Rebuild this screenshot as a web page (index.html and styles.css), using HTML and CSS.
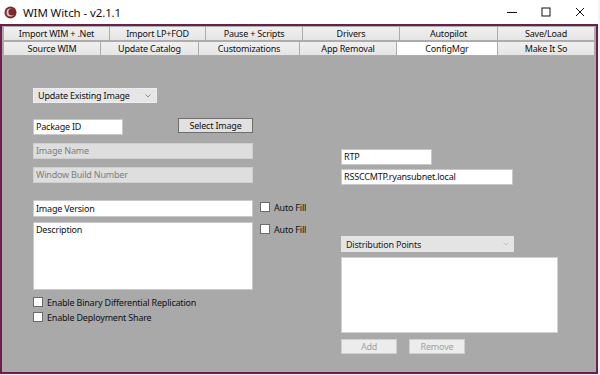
FILE: index.html
```html
<!DOCTYPE html>
<html lang="en">
<head>
    <meta charset="UTF-8">
    <title>WIM Witch - v2.1.1</title>
    <link rel="stylesheet" href="styles.css">
</head>
<body>
    <div class="window">
        <div class="titlebar">
            <svg class="app-icon" width="13" height="13" viewBox="0 0 13 13">
                <circle cx="6.5" cy="6.5" r="6" fill="#7b2b2b"/>
                <circle cx="6.5" cy="6.5" r="4" fill="#d9c9c9"/>
                <circle cx="8" cy="6" r="3.6" fill="#7b2b2b"/>
            </svg>
            <span class="title">WIM Witch - v2.1.1</span>
            <div class="controls">
                <svg width="10" height="10" viewBox="0 0 10 10"><path d="M0 5.5h10" stroke="#111" stroke-width="1"/></svg>
                <svg width="10" height="10" viewBox="0 0 10 10"><rect x="1" y="1" width="8" height="8" fill="none" stroke="#111" stroke-width="1"/></svg>
                <svg width="10" height="10" viewBox="0 0 10 10"><path d="M1 1l8 8M9 1l-8 8" stroke="#111" stroke-width="1"/></svg>
            </div>
        </div>
        <div class="frame">
            <div class="tabrow">
                <div class="tab w107">Import WIM + .Net</div>
                <div class="tab w96">Import LP+FOD</div>
                <div class="tab w97">Pause + Scripts</div>
                <div class="tab w97">Drivers</div>
                <div class="tab w98">Autopilot</div>
                <div class="tab w97">Save/Load</div>
            </div>
            <div class="tabrow">
                <div class="tab w98">Source WIM</div>
                <div class="tab w98">Update Catalog</div>
                <div class="tab w101">Customizations</div>
                <div class="tab w97">App Removal</div>
                <div class="tab w101 selected">ConfigMgr</div>
                <div class="tab w97">Make It So</div>
            </div>
            <div class="panel">
                <div class="col-left">
                    <div class="combo focus">
                        <span>Update Existing Image</span>
                        <svg width="6" height="4" viewBox="0 0 6 4"><path d="M0.5 0.5l2.5 2.5 2.5-2.5" fill="none" stroke="#777" stroke-width="0.8"/></svg>
                    </div>
                    <div class="row pkg-row">
                        <div class="textbox w90">Package ID</div>
                        <div class="button select-btn">Select Image</div>
                    </div>
                    <div class="textbox disabled w220 mt8">Image Name</div>
                    <div class="textbox disabled w220 mt8">Window Build Number</div>
                    <div class="row version-row">
                        <div class="textbox w220 h17">Image Version</div>
                        <label class="check autofill"><span class="box"></span>Auto Fill</label>
                    </div>
                    <div class="row desc-row">
                        <div class="textbox w220 area">Description</div>
                        <label class="check autofill"><span class="box"></span>Auto Fill</label>
                    </div>
                    <label class="check option first"><span class="box"></span>Enable Binary Differential Replication</label>
                    <label class="check option"><span class="box"></span>Enable Deployment Share</label>
                </div>
                <div class="col-right">
                    <div class="textbox w91 rtp">RTP</div>
                    <div class="textbox w172 mt4">RSSCCMTP.ryansubnet.local</div>
                    <div class="combo disabled dp">
                        <span>Distribution Points</span>
                        <svg width="6" height="4" viewBox="0 0 6 4"><path d="M0.5 0.5l2.5 2.5 2.5-2.5" fill="none" stroke="#bbb" stroke-width="0.8"/></svg>
                    </div>
                    <div class="listbox"></div>
                    <div class="row buttons">
                        <div class="button off">Add</div>
                        <div class="button off">Remove</div>
                    </div>
                </div>
            </div>
        </div>
    </div>
</body>
</html>
```

FILE: styles.css
```css
body {
    margin: 0;
    background: #f4f4f4;
    font-family: "Noto Sans", sans-serif;
    font-size: 9px;
    letter-spacing: -0.2px;
    color: #111;
}

.window {
    width: 598px;
}

.titlebar {
    height: 24px;
    background: #fff;
    display: flex;
    align-items: center;
    padding-left: 4px;
    box-sizing: border-box;
}

.app-icon {
    margin-right: 6px;
    margin-top: 1px;
}

.title {
    font-size: 11.5px;
    letter-spacing: -0.1px;
    color: #111;
}

.controls {
    margin-left: auto;
    display: flex;
    gap: 24px;
    padding-right: 13px;
}

.frame {
    border: 2px solid #6b1f4c;
    background: #a9a9a9;
}

.tabrow {
    display: flex;
    padding-left: 1px;
    height: 15px;
}

.tab {
    height: 15px;
    box-sizing: border-box;
    border: 1px solid #acacac;
    border-left: none;
    background: linear-gradient(#f0f0f0, #e5e5e5);
    text-align: center;
    line-height: 13px;
    white-space: nowrap;
}

.tab:first-child {
    border-left: 1px solid #acacac;
}

.tab.selected {
    background: #fff;
}

.w96 { width: 96px; }
.w97 { width: 97px; }
.w98 { width: 98px; }
.w101 { width: 101px; }
.w107 { width: 107px; }

.panel {
    height: 316px;
    display: flex;
    padding-left: 31px;
    box-sizing: border-box;
}

.col-left {
    width: 308px;
    padding-top: 32px;
}

.col-right {
    padding-top: 93px;
}

.row {
    display: flex;
    align-items: flex-start;
}

.combo {
    width: 124px;
    height: 15px;
    box-sizing: border-box;
    background: #e6e6e6;
    display: flex;
    align-items: center;
    justify-content: space-between;
    padding: 0 5px 0 4px;
    white-space: nowrap;
}

.combo.focus {
    border: 1px dotted #f4f4f4;
}

.combo.disabled {
    width: 173px;
    height: 16px;
    background: #e4e4e4;
    margin-top: 51px;
    color: #222;
    padding-left: 5px;
}

.textbox {
    height: 16px;
    box-sizing: border-box;
    background: #fff;
    border: 1px solid #c8c8c8;
    padding-left: 2px;
    line-height: 14px;
    white-space: nowrap;
}

.textbox.disabled {
    background: #dedede;
    border-color: #cfcfcf;
    color: #7d7d7d;
}

.w90 { width: 90px; }
.w91 { width: 91px; }
.w172 { width: 172px; }
.w220 { width: 220px; }
.h17 { height: 17px; line-height: 15px; }
.mt4 { margin-top: 4px; }
.mt8 { margin-top: 8px; }

.textbox.area {
    height: 68px;
}

.pkg-row {
    margin-top: 16px;
}

.button {
    height: 15px;
    box-sizing: border-box;
    border: 1px solid #6e6e6e;
    background: #e1e1e1;
    text-align: center;
    line-height: 13px;
}

.select-btn {
    width: 75px;
    margin-left: 55px;
    margin-top: -1px;
}

.version-row {
    margin-top: 17px;
}

.desc-row {
    margin-top: 5px;
}

.check {
    display: flex;
    align-items: center;
    height: 12px;
    white-space: nowrap;
}

.box {
    width: 10px;
    height: 10px;
    box-sizing: border-box;
    background: #fff;
    border: 1px solid #6a6a6a;
    margin-right: 4px;
}

.autofill {
    margin-left: 7px;
    margin-top: 1px;
}

.option {
    margin-top: 3px;
}

.option.first {
    margin-top: 6px;
}

.listbox {
    width: 217px;
    height: 76px;
    background: #fff;
    border: 1px solid #d0d0d0;
    box-sizing: border-box;
    margin-top: 5px;
}

.buttons {
    margin-top: 6px;
    gap: 12px;
}

.button.off {
    width: 56px;
    background: #ececec;
    border-color: #cfcfcf;
    color: #a2a2a2;
}
```
